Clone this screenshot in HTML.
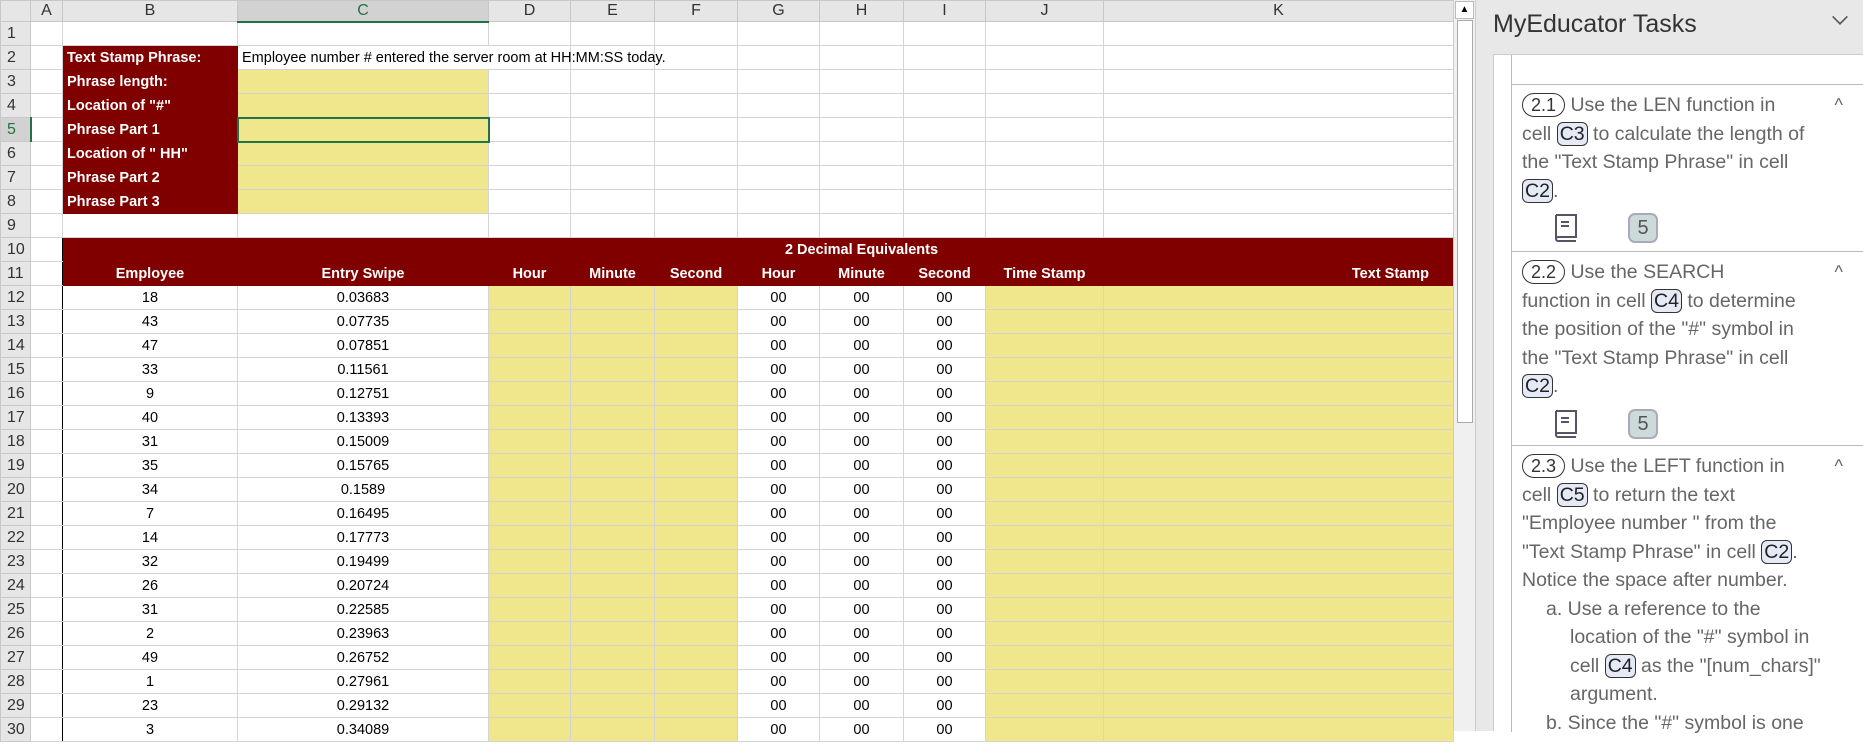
<!DOCTYPE html>
<html><head><meta charset="utf-8"><style>
*{box-sizing:border-box;margin:0;padding:0}
body{width:1863px;height:731px;overflow:hidden;background:#fff;font-family:"Liberation Sans",sans-serif;position:relative}
#grid{position:absolute;left:0;top:0;width:1453px;border-collapse:collapse;table-layout:fixed;font-size:14.5px}
#grid td{height:24px;border:1px solid #d4d4d4;white-space:nowrap;overflow:visible;padding:0 4px;color:#000;text-align:center}
#grid tr.h td{height:21px;background:#e6e6e6;color:#333;font-size:16px;border-color:#c8c8c8}
#grid td.rh{background:#e6e6e6;color:#333;font-size:16px;text-align:left;padding-left:6px;border-color:#c8c8c8}
.m{background:#800000!important;color:#fff!important;font-weight:bold;border-color:#800000!important}
.y{background:#f0e68c}
.l{text-align:left!important}
.r{text-align:right!important}
#pane{position:absolute;left:1476px;top:0;width:387px;height:731px;background:#e8e8e8}
#pane h1{position:absolute;left:17px;top:10px;font-weight:normal;font-size:25px;color:#333}
#box{position:absolute;left:17px;top:54px;width:370px;height:677px;background:#fff;border-left:1px solid #ccc;border-top:1px solid #ccc}
#inner{position:absolute;left:17px;top:0;width:353px;height:677px;border-left:1px solid #bbb}
.card{position:absolute;left:0;width:353px;border-top:1px solid #bbb;color:#666;font-size:19.5px;line-height:28.5px;padding-left:10px}
.b{display:inline-block;border:1px solid #333;border-radius:12px;padding:0 8px;line-height:22px;color:#333;font-size:18px}
.c{display:inline-block;border:1px solid #333;border-radius:6px;background:#e6e9f6;padding:0 2px;line-height:22px;color:#222}
.chev{position:absolute;right:22px;top:6px;color:#666;font-size:18px}
.n{display:inline-block;background:#ccdada;border:2px solid #aab;border-radius:7px;width:30px;height:30px;text-align:center;line-height:26px;color:#555;font-size:20px;margin-left:50px;vertical-align:middle}
</style></head><body>
<table id="grid">
<colgroup><col style="width:30px"><col style="width:32px"><col style="width:175px"><col style="width:251px"><col style="width:82px"><col style="width:84px"><col style="width:83px"><col style="width:82px"><col style="width:84px"><col style="width:82px"><col style="width:118px"><col style="width:350px"></colgroup>
<tr class="h"><td></td><td>A</td><td>B</td><td style="background:#d2d2d2;border-bottom:2px solid #217346;color:#217346">C</td><td>D</td><td>E</td><td>F</td><td>G</td><td>H</td><td>I</td><td>J</td><td>K</td></tr>
<tr><td class="rh">1</td><td></td><td></td><td></td><td></td><td></td><td></td><td></td><td></td><td></td><td></td><td></td></tr>
<tr><td class="rh">2</td><td></td><td class="m l">Text Stamp Phrase:</td><td class="l" style="border-right-color:#fff">Employee number # entered the server room at HH:MM:SS today.</td><td></td><td></td><td></td><td></td><td></td><td></td><td></td><td></td></tr>
<tr><td class="rh">3</td><td></td><td class="m l">Phrase length:</td><td class="y"></td><td></td><td></td><td></td><td></td><td></td><td></td><td></td><td></td></tr>
<tr><td class="rh">4</td><td></td><td class="m l">Location of "#"</td><td class="y"></td><td></td><td></td><td></td><td></td><td></td><td></td><td></td><td></td></tr>
<tr><td class="rh" style="background:#d2d2d2;color:#217346;border-right:2px solid #217346">5</td><td></td><td class="m l">Phrase Part 1</td><td class="y" style="border:2px solid #217346"></td><td></td><td></td><td></td><td></td><td></td><td></td><td></td><td></td></tr>
<tr><td class="rh">6</td><td></td><td class="m l">Location of " HH"</td><td class="y"></td><td></td><td></td><td></td><td></td><td></td><td></td><td></td><td></td></tr>
<tr><td class="rh">7</td><td></td><td class="m l">Phrase Part 2</td><td class="y"></td><td></td><td></td><td></td><td></td><td></td><td></td><td></td><td></td></tr>
<tr><td class="rh">8</td><td></td><td class="m l">Phrase Part 3</td><td class="y"></td><td></td><td></td><td></td><td></td><td></td><td></td><td></td><td></td></tr>
<tr><td class="rh">9</td><td></td><td></td><td></td><td></td><td></td><td></td><td></td><td></td><td></td><td></td><td></td></tr>
<tr><td class="rh">10</td><td style="border-right:1px solid #000"></td><td class="m"></td><td class="m"></td><td class="m"></td><td class="m"></td><td class="m"></td><td class="m" colspan="3">2 Decimal Equivalents</td><td class="m"></td><td class="m"></td></tr>
<tr><td class="rh">11</td><td style="border-right:1px solid #000"></td><td class="m">Employee</td><td class="m">Entry Swipe</td><td class="m">Hour</td><td class="m">Minute</td><td class="m">Second</td><td class="m">Hour</td><td class="m">Minute</td><td class="m">Second</td><td class="m">Time Stamp</td><td class="m r" style="padding-right:24px">Text Stamp</td></tr>
<tr><td class="rh">12</td><td style="border-right:1px solid #000"></td><td>18</td><td>0.03683</td><td class="y"></td><td class="y"></td><td class="y"></td><td>00</td><td>00</td><td>00</td><td class="y"></td><td class="y"></td></tr>
<tr><td class="rh">13</td><td style="border-right:1px solid #000"></td><td>43</td><td>0.07735</td><td class="y"></td><td class="y"></td><td class="y"></td><td>00</td><td>00</td><td>00</td><td class="y"></td><td class="y"></td></tr>
<tr><td class="rh">14</td><td style="border-right:1px solid #000"></td><td>47</td><td>0.07851</td><td class="y"></td><td class="y"></td><td class="y"></td><td>00</td><td>00</td><td>00</td><td class="y"></td><td class="y"></td></tr>
<tr><td class="rh">15</td><td style="border-right:1px solid #000"></td><td>33</td><td>0.11561</td><td class="y"></td><td class="y"></td><td class="y"></td><td>00</td><td>00</td><td>00</td><td class="y"></td><td class="y"></td></tr>
<tr><td class="rh">16</td><td style="border-right:1px solid #000"></td><td>9</td><td>0.12751</td><td class="y"></td><td class="y"></td><td class="y"></td><td>00</td><td>00</td><td>00</td><td class="y"></td><td class="y"></td></tr>
<tr><td class="rh">17</td><td style="border-right:1px solid #000"></td><td>40</td><td>0.13393</td><td class="y"></td><td class="y"></td><td class="y"></td><td>00</td><td>00</td><td>00</td><td class="y"></td><td class="y"></td></tr>
<tr><td class="rh">18</td><td style="border-right:1px solid #000"></td><td>31</td><td>0.15009</td><td class="y"></td><td class="y"></td><td class="y"></td><td>00</td><td>00</td><td>00</td><td class="y"></td><td class="y"></td></tr>
<tr><td class="rh">19</td><td style="border-right:1px solid #000"></td><td>35</td><td>0.15765</td><td class="y"></td><td class="y"></td><td class="y"></td><td>00</td><td>00</td><td>00</td><td class="y"></td><td class="y"></td></tr>
<tr><td class="rh">20</td><td style="border-right:1px solid #000"></td><td>34</td><td>0.1589</td><td class="y"></td><td class="y"></td><td class="y"></td><td>00</td><td>00</td><td>00</td><td class="y"></td><td class="y"></td></tr>
<tr><td class="rh">21</td><td style="border-right:1px solid #000"></td><td>7</td><td>0.16495</td><td class="y"></td><td class="y"></td><td class="y"></td><td>00</td><td>00</td><td>00</td><td class="y"></td><td class="y"></td></tr>
<tr><td class="rh">22</td><td style="border-right:1px solid #000"></td><td>14</td><td>0.17773</td><td class="y"></td><td class="y"></td><td class="y"></td><td>00</td><td>00</td><td>00</td><td class="y"></td><td class="y"></td></tr>
<tr><td class="rh">23</td><td style="border-right:1px solid #000"></td><td>32</td><td>0.19499</td><td class="y"></td><td class="y"></td><td class="y"></td><td>00</td><td>00</td><td>00</td><td class="y"></td><td class="y"></td></tr>
<tr><td class="rh">24</td><td style="border-right:1px solid #000"></td><td>26</td><td>0.20724</td><td class="y"></td><td class="y"></td><td class="y"></td><td>00</td><td>00</td><td>00</td><td class="y"></td><td class="y"></td></tr>
<tr><td class="rh">25</td><td style="border-right:1px solid #000"></td><td>31</td><td>0.22585</td><td class="y"></td><td class="y"></td><td class="y"></td><td>00</td><td>00</td><td>00</td><td class="y"></td><td class="y"></td></tr>
<tr><td class="rh">26</td><td style="border-right:1px solid #000"></td><td>2</td><td>0.23963</td><td class="y"></td><td class="y"></td><td class="y"></td><td>00</td><td>00</td><td>00</td><td class="y"></td><td class="y"></td></tr>
<tr><td class="rh">27</td><td style="border-right:1px solid #000"></td><td>49</td><td>0.26752</td><td class="y"></td><td class="y"></td><td class="y"></td><td>00</td><td>00</td><td>00</td><td class="y"></td><td class="y"></td></tr>
<tr><td class="rh">28</td><td style="border-right:1px solid #000"></td><td>1</td><td>0.27961</td><td class="y"></td><td class="y"></td><td class="y"></td><td>00</td><td>00</td><td>00</td><td class="y"></td><td class="y"></td></tr>
<tr><td class="rh">29</td><td style="border-right:1px solid #000"></td><td>23</td><td>0.29132</td><td class="y"></td><td class="y"></td><td class="y"></td><td>00</td><td>00</td><td>00</td><td class="y"></td><td class="y"></td></tr>
<tr><td class="rh">30</td><td style="border-right:1px solid #000"></td><td>3</td><td>0.34089</td><td class="y"></td><td class="y"></td><td class="y"></td><td>00</td><td>00</td><td>00</td><td class="y"></td><td class="y"></td></tr>
</table>
<div style="position:absolute;left:1453px;top:0;width:23px;height:731px;background:#f0f0f0;border-left:1px solid #ccc;border-right:1px solid #ccc"></div>
<div style="position:absolute;left:1455px;top:1px;width:19px;height:18px;background:#fff;border:1px solid #bbb;font-size:10px;text-align:center;line-height:16px">▲</div>
<div style="position:absolute;left:1457px;top:20px;width:16px;height:403px;background:#fff;border:1px solid #aaa"></div>
<div id="pane"><h1>MyEducator Tasks</h1><div style="position:absolute;right:16px;top:10px;width:14px;height:14px;border-right:2px solid #555;border-bottom:2px solid #555;transform:rotate(45deg) scale(0.8)"></div>
<div id="box"><div id="inner">
<div class="card" style="top:29px;height:168px;padding-top:6px"><span class="b">2.1</span> Use the LEN function in<br>cell <span class="c">C3</span> to calculate the length of<br>the "Text Stamp Phrase" in cell<br><span class="c">C2</span>.<div class="chev">^</div>
<div style="margin:8px 0 0 30px;height:36px"><svg width="26" height="30" viewBox="0 0 26 30" style="vertical-align:middle"><path d="M4 2h20v22H6a2 2 0 0 0 0 4h18M4 2v24M9 9h8M9 13h8" fill="none" stroke="#556" stroke-width="2"/></svg><span class="n">5</span></div></div>
<div class="card" style="top:196px;height:196px;padding-top:6px"><span class="b">2.2</span> Use the SEARCH<br>function in cell <span class="c">C4</span> to determine<br>the position of the "#" symbol in<br>the "Text Stamp Phrase" in cell<br><span class="c">C2</span>.<div class="chev">^</div>
<div style="margin:8px 0 0 30px;height:36px"><svg width="26" height="30" viewBox="0 0 26 30" style="vertical-align:middle"><path d="M4 2h20v22H6a2 2 0 0 0 0 4h18M4 2v24M9 9h8M9 13h8" fill="none" stroke="#556" stroke-width="2"/></svg><span class="n">5</span></div></div>
<div class="card" style="top:390px;height:300px;padding-top:6px"><span class="b">2.3</span> Use the LEFT function in<br>cell <span class="c">C5</span> to return the text<br>"Employee number " from the<br>"Text Stamp Phrase" in cell <span class="c">C2</span>.<br>Notice the space after number.<div class="chev">^</div>
<div style="padding-left:24px">a. Use a reference to the</div><div style="padding-left:48px">location of the "#" symbol in<br>cell <span class="c">C4</span> as the "[num_chars]"<br>argument.</div><div style="padding-left:24px">b. Since the "#" symbol is one</div></div>
</div></div></div>
</body></html>
